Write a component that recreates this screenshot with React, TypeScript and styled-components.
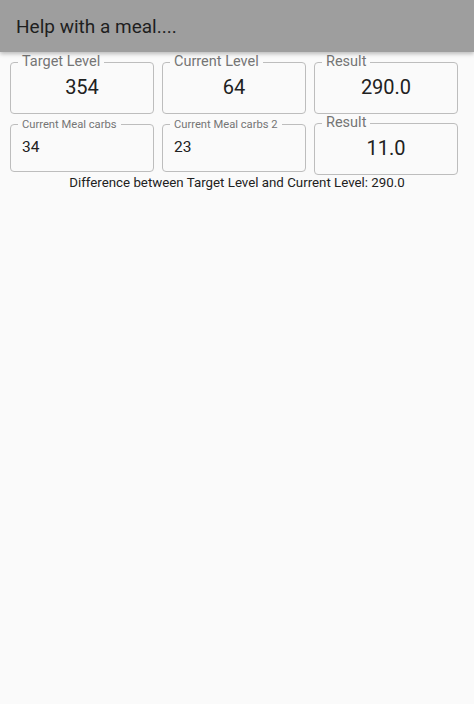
import React from "react";
import styled, { createGlobalStyle } from "styled-components";

const GlobalStyle = createGlobalStyle`
  html, body {
    margin: 0;
    padding: 0;
    background: #fafafa;
    font-family: Roboto, "Noto Sans", sans-serif;
  }
  #root {
    min-height: 704px;
    background: #fafafa;
  }
`;

const AppBar = styled.header`
  height: 52px;
  background: #9e9e9e;
  display: flex;
  align-items: center;
  padding: 0 16px;
  box-shadow: 0 2px 4px rgba(0, 0, 0, 0.25);
  position: relative;
`;

const Title = styled.h1`
  margin: 0;
  font-size: 19px;
  font-weight: 400;
  color: #1e1e1e;
`;

const Body = styled.main`
  padding-top: 2px;
`;

const Row = styled.div<{ $offset?: number }>`
  display: grid;
  grid-template-columns: repeat(3, 1fr);
  column-gap: 8px;
  align-items: center;
  padding: 0 16px 0 10px;
  margin-top: ${(p) => p.$offset ?? 0}px;
`;

const Field = styled.fieldset<{ $small?: boolean }>`
  margin: 0;
  min-width: 0;
  border: 1px solid #bdbdbd;
  border-radius: 4px;
  padding: ${(p) => (p.$small ? "6px 0 14px" : "5px 0 14px")};
`;

const Label = styled.legend<{ $small?: boolean }>`
  margin-left: 7px;
  padding: 0 4px;
  color: #757575;
  font-size: ${(p) => (p.$small ? "11.2px" : "14.5px")};
  line-height: ${(p) => (p.$small ? "13px" : "16px")};
  white-space: nowrap;
`;

const Value = styled.div<{ $small?: boolean }>`
  padding: 0 11px;
  color: #212121;
  font-size: ${(p) => (p.$small ? "15.5px" : "20px")};
  line-height: ${(p) => (p.$small ? "20px" : "24px")};
  text-align: ${(p) => (p.$small ? "left" : "center")};
`;

const Difference = styled.p`
  margin: 0;
  text-align: center;
  font-size: 13.3px;
  line-height: 16px;
  color: #212121;
`;

const Box = ({ label, value, small }: { label: string; value: string; small?: boolean }) => (
  <Field $small={small}>
    <Label $small={small}>{label}</Label>
    <Value $small={small}>{value}</Value>
  </Field>
);

export default function App() {
  return (
    <>
      <GlobalStyle />
      <AppBar>
        <Title>Help with a meal....</Title>
      </AppBar>
      <Body>
        <Row>
          <Box label="Target Level" value="354" />
          <Box label="Current Level" value="64" />
          <Box label="Result" value="290.0" />
        </Row>
        <Row $offset={1}>
          <Box label="Current Meal carbs" value="34" small />
          <Box label="Current Meal carbs 2" value="23" small />
          <Box label="Result" value="11.0" />
        </Row>
        <Difference>Difference between Target Level and Current Level: 290.0</Difference>
      </Body>
    </>
  );
}
